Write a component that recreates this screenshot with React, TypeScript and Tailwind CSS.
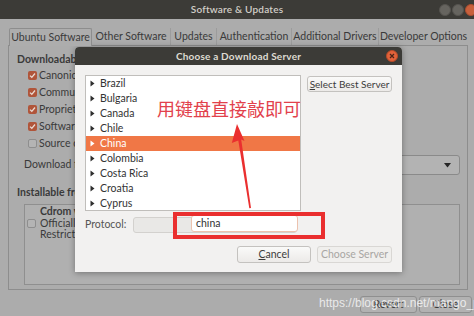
import type { ReactNode } from "react";

const countries = ["Brazil", "Bulgaria", "Canada", "Chile", "China", "Colombia", "Costa Rica", "Croatia", "Cyprus"];

function Check({ checked }: { checked?: boolean }) {
  if (!checked) {
    return <span className="w-[9px] h-[9px] shrink-0 rounded-[2px] border border-[#8e8e8e] bg-[#b4b4b4]" />;
  }
  return (
    <span className="w-[9px] h-[9px] shrink-0 rounded-[2px] bg-[#b0553a] flex items-center justify-center">
      <svg width="7" height="7" viewBox="0 0 7 7">
        <path d="M1 3.6 L2.8 5.3 L6 1.5" stroke="#eadbd4" strokeWidth="1.3" fill="none" />
      </svg>
    </span>
  );
}

function Row({ checked, children }: { checked?: boolean; children: ReactNode }) {
  return (
    <div className="h-[17px] pl-[11px] flex items-center gap-[2px]">
      <Check checked={checked} />
      <span className="whitespace-nowrap">{children}</span>
    </div>
  );
}

function Tab({ label, w, active }: { label: string; w: string; active?: boolean }) {
  return (
    <div
      className={
        active
          ? `${w} h-[18px] flex items-center justify-center border border-b-0 border-[#8d8d8d] bg-[#adadad] rounded-t-[2px] -mb-px relative z-10`
          : `${w} h-[17px] flex items-center justify-center border-l border-[#9c9c9c]`
      }
    >
      {label}
    </div>
  );
}

function Triangle({ white }: { white?: boolean }) {
  return (
    <svg width="5" height="7" viewBox="0 0 5 7" className="shrink-0">
      <path d="M0.5 0.5 L4.5 3.5 L0.5 6.5 Z" fill={white ? "#ffffff" : "#2e2e2e"} />
    </svg>
  );
}

export default function App() {
  return (
    <div className="relative w-[474px] h-[316px] overflow-hidden bg-[#acacac] text-[10.5px] text-[#3a3a3a] font-['Lato',sans-serif]">
      {/* title bar */}
      <div className="relative h-[19px] bg-[#3c3b37] flex items-center justify-center text-[#d2cec7] text-[10px] font-semibold tracking-[0.2px]">
        Software &amp; Updates
        <div className="absolute right-[-3px] top-[4px] flex gap-[1px]">
          <span className="w-[12px] h-[12px] rounded-full bg-[#66645f] border border-[#55534f]" />
          <span className="w-[12px] h-[12px] rounded-full bg-[#66645f] border border-[#55534f]" />
          <span className="w-[12px] h-[12px] rounded-full bg-[#c9603c] border border-[#a94e30]" />
        </div>
      </div>

      {/* tabs */}
      <div className="flex items-end pl-[9px] pt-[9px]">
        <Tab label="Ubuntu Software" w="w-[83px]" active />
        <div className="w-[78px] h-[17px] flex items-center justify-center">Other Software</div>
        <Tab label="Updates" w="w-[46px]" />
        <Tab label="Authentication" w="w-[75px]" />
        <Tab label="Additional Drivers" w="w-[87px]" />
        <Tab label="Developer Options" w="w-[90px]" />
      </div>

      {/* panel */}
      <div className="ml-[8px] w-[460px] h-[245px] border border-[#8d8d8d] pl-[8px] pr-[7px] pt-[7px]">
        <div className="h-[14px] flex items-center font-bold">Downloadable from the Internet</div>
        <Row checked>Canonical-supported free and open-source software (main)</Row>
        <Row checked>Community-maintained free and open-source software (universe)</Row>
        <Row checked>Proprietary drivers for devices (restricted)</Row>
        <Row checked>Software restricted by copyright or legal issues (multiverse)</Row>
        <Row>Source code</Row>
        <div className="mt-[3px] h-[20px] pl-[7px] flex items-center gap-[8px]">
          <span>Download from:</span>
          <div className="flex-1 h-[20px] rounded-[3px] border border-[#8a8a8a] bg-[#b3b3b3] flex items-center justify-between px-[8px]">
            <span>Server for China</span>
            <svg width="7" height="5" viewBox="0 0 7 5">
              <path d="M0 0 L7 0 L3.5 4.5 Z" fill="#262626" />
            </svg>
          </div>
        </div>
        <div className="mt-[11px] h-[14px] flex items-center font-bold">Installable from CD-ROM/DVD</div>
        <div className="mt-[4px] ml-[7px] h-[81px] border border-[#8f8f8f] bg-[#b0b0b0] pl-[2px] pt-[1px] flex items-start gap-[4px]">
          <div className="h-[35px] flex items-center">
            <Check />
          </div>
          <div className="leading-[11.5px]">
            <div className="font-bold">Cdrom with Ubuntu 18.04</div>
            <div>Officially supported</div>
            <div>Restricted copyright</div>
          </div>
        </div>
      </div>

      {/* bottom buttons */}
      <div className="mt-[6px] pr-[2px] flex justify-end gap-[2px]">
        <div className="w-[57px] h-[17px] rounded-[3px] border border-[#8f8f8f] bg-[#b2b2b2] flex items-center justify-center">Revert</div>
        <div className="w-[53px] h-[17px] rounded-[3px] border border-[#8f8f8f] bg-[#b2b2b2] flex items-center justify-center">Close</div>
      </div>

      {/* dialog */}
      <div className="absolute left-[75px] top-[47px] w-[327px] h-[225px] bg-[#f2f1f0] rounded-t-[4px] shadow-[0_1px_6px_rgba(0,0,0,0.35)] flex flex-col">
        <div className="relative h-[18px] rounded-t-[4px] bg-[#3c3b37] flex items-center justify-center text-[#dfdbd2] text-[10px] font-bold tracking-[0.2px]">
          Choose a Download Server
          <span className="absolute right-[4px] top-[3px] w-[12px] h-[12px] rounded-full bg-[#e2623a] border border-[#b54a28] flex items-center justify-center">
            <svg width="6" height="6" viewBox="0 0 6 6">
              <path d="M1 1 L5 5 M5 1 L1 5" stroke="#4a2418" strokeWidth="1.2" />
            </svg>
          </span>
        </div>
        <div className="px-[10px] pt-[10px] flex flex-col">
          <div className="flex items-start gap-[6px]">
            <div className="w-[216px] h-[136px] overflow-hidden border border-[#c0bebb] bg-white">
              {countries.map((c) => (
                <div
                  key={c}
                  className={
                    c === "China"
                      ? "h-[15px] pl-[4px] flex items-center gap-[5px] bg-[#f07746] text-white"
                      : "h-[15px] pl-[4px] flex items-center gap-[5px] text-[#333333]"
                  }
                >
                  <Triangle white={c === "China"} />
                  {c}
                </div>
              ))}
            </div>
            <div className="mt-[1px] w-[85px] h-[16px] rounded-[3px] border border-[#c4c2bf] bg-gradient-to-b from-[#fafaf9] to-[#eceae8] flex items-center justify-center text-[#3c3c3c] text-[10px]">
              <span className="whitespace-nowrap">
                <span className="underline underline-offset-1">S</span>elect Best Server
              </span>
            </div>
          </div>
          <div className="mt-[6px] h-[16px] flex items-center text-[#555555]">
            <span className="w-[48px] whitespace-nowrap">Protocol:</span>
            <div className="w-[164px] h-[16px] rounded-[3px] border border-[#d3d1ce] bg-[#e9e8e6]" />
          </div>
          <div className="mt-[13px] flex justify-end gap-[6px]">
            <div className="w-[74px] h-[17px] rounded-[3px] border border-[#c4c2bf] bg-gradient-to-b from-[#fafaf9] to-[#eceae8] flex items-center justify-center text-[#3c3c3c]">
              <span className="whitespace-nowrap">
                <span className="underline underline-offset-1">C</span>ancel
              </span>
            </div>
            <div className="w-[75px] h-[17px] rounded-[3px] border border-[#d9d7d4] bg-[#f0efed] flex items-center justify-center text-[#a8a6a3] whitespace-nowrap">
              Choose Server
            </div>
          </div>
        </div>
      </div>

      {/* type-ahead search entry */}
      <div className="absolute left-[191px] top-[215px] w-[107px] h-[17px] rounded-[3px] border border-[#ecc2ae] bg-white pl-[4px] flex items-center text-[#333333]">
        china
      </div>

      {/* annotation */}
      <div className="absolute left-[173px] top-[212px] w-[152px] h-[27px] border-[4px] border-[#ea2f2f]" />
      <div className="absolute left-[157px] top-[98px] text-[18px] leading-[20px] text-[#e2414c] whitespace-nowrap font-['Noto_Sans_CJK_SC',sans-serif]">
        用键盘直接敲即可
      </div>
      <svg className="absolute left-[228px] top-[120px]" width="26" height="92" viewBox="0 0 26 92">
        <path d="M9 4 L16.5 21 L13.2 19.6 L23 88 L21.3 88.3 L10.3 20.6 L3.8 23 Z" fill="#ea2f2f" />
      </svg>

      {/* watermark */}
      <div className="absolute left-[319px] top-[296px] text-[12px] leading-[14px] text-white/75 font-['Liberation_Sans',sans-serif] whitespace-nowrap">
        https://blog.csdn.net/mango_pu
      </div>
    </div>
  );
}
